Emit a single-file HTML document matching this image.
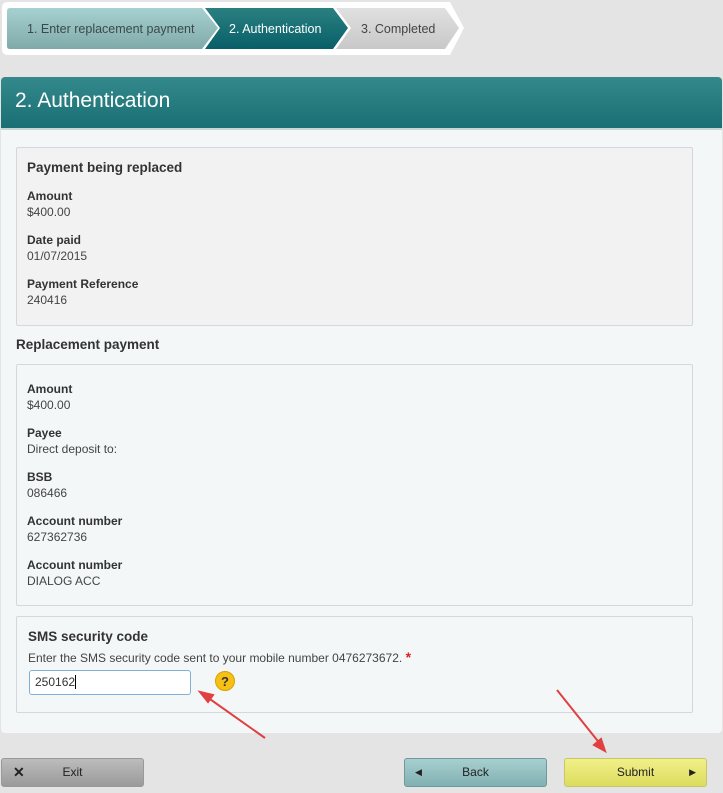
<!DOCTYPE html><html><head><style>
body{margin:0;width:723px;height:793px;background:#e4e4e4;font-family:"Liberation Sans",sans-serif;position:relative;overflow:hidden;font-size:12px;color:#333}
.a{position:absolute}
.lbl{font-weight:bold;font-size:12px;color:#333}
.val{font-size:12px;color:#444}
.box{position:absolute;left:16px;width:675px;border:1px solid #d4d8da;border-radius:2px}
.btn{position:absolute;top:758px;height:27px;width:141px;border:1px solid #999;border-radius:3px;font-size:12px;line-height:27px;text-align:center;color:#222}
</style></head><body>
<svg class="a" style="left:0;top:0" width="470" height="58">
<defs>
<linearGradient id="g1" x1="0" y1="0" x2="0" y2="1"><stop offset="0" stop-color="#a7d0d0"/><stop offset="1" stop-color="#80a9aa"/></linearGradient>
<linearGradient id="g2" x1="0" y1="0" x2="0" y2="1"><stop offset="0" stop-color="#2a8080"/><stop offset="1" stop-color="#085f68"/></linearGradient>
<linearGradient id="g3" x1="0" y1="0" x2="0" y2="1"><stop offset="0" stop-color="#e0e0e0"/><stop offset="1" stop-color="#c8c8c8"/></linearGradient>
</defs>
<path d="M8 2 H450 L464 28 L450 55 H8 Q2 55 2 49 V8 Q2 2 8 2Z" fill="#fff"/>
<path d="M10 8 H202 L218 28 L202 49 H10 Q7 49 7 46 V11 Q7 8 10 8Z" fill="url(#g1)"/>
<path d="M205 8 H333 L348 28 L333 49 H205 L220 28Z" fill="url(#g2)"/>
<path d="M336 8 H445 L459 28 L445 49 H336 L351 28Z" fill="url(#g3)"/>
<text x="27" y="33" font-family="Liberation Sans" font-size="12.5" fill="#3a4a4a">1. Enter replacement payment</text>
<text x="229" y="33" font-family="Liberation Sans" font-size="12.5" fill="#fff">2. Authentication</text>
<text x="361" y="33" font-family="Liberation Sans" font-size="12.5" fill="#444">3. Completed</text>
</svg>
<div class="a" style="left:1px;top:77px;width:721px;height:656px;background:#f4f7f8;border-radius:4px"></div>
<div class="a" style="left:1px;top:77px;width:721px;height:51px;background:linear-gradient(#33898b,#1a6f74);border-radius:4px 4px 0 0;border-bottom:2px solid #c9d5d6"></div>
<div class="a" style="left:15px;top:89px;font-size:21px;color:#fff">2. Authentication</div>
<div class="box" style="top:147px;height:177px;background:#f2f2f2"></div>
<div class="a" style="left:27px;top:160px;font-weight:bold;font-size:13.5px;color:#333">Payment being replaced</div>
<div class="a lbl" style="left:27px;top:189px">Amount</div><div class="a val" style="left:27px;top:205px">$400.00</div>
<div class="a lbl" style="left:27px;top:233px">Date paid</div><div class="a val" style="left:27px;top:249px">01/07/2015</div>
<div class="a lbl" style="left:27px;top:277px">Payment Reference</div><div class="a val" style="left:27px;top:293px">240416</div>
<div class="a" style="left:16px;top:337px;font-weight:bold;font-size:13.5px;color:#333">Replacement payment</div>
<div class="box" style="top:364px;height:240px;background:#f4f7f8"></div>
<div class="a lbl" style="left:27px;top:382px">Amount</div><div class="a val" style="left:27px;top:398px">$400.00</div>
<div class="a lbl" style="left:27px;top:426px">Payee</div><div class="a val" style="left:27px;top:442px">Direct deposit to:</div>
<div class="a lbl" style="left:27px;top:470px">BSB</div><div class="a val" style="left:27px;top:486px">086466</div>
<div class="a lbl" style="left:27px;top:514px">Account number</div><div class="a val" style="left:27px;top:530px">627362736</div>
<div class="a lbl" style="left:27px;top:558px">Account number</div><div class="a val" style="left:27px;top:574px">DIALOG ACC</div>
<div class="box" style="top:616px;height:95px;background:#f4f7f8"></div>
<div class="a" style="left:28px;top:629px;font-weight:bold;font-size:13.5px;color:#333">SMS security code</div>
<div class="a val" style="left:28px;top:649px">Enter the SMS security code sent to your mobile number 0476273672. <span style="color:#d22;font-weight:bold;font-size:14px">*</span></div>
<div class="a" style="left:29px;top:670px;width:160px;height:23px;background:#fff;border:1px solid #7fb0d8;border-radius:3px;font-size:12px;line-height:23px;padding-left:5px;box-sizing:content-box;width:155px">250162<span style="border-left:1px solid #000">&nbsp;</span></div>
<div class="a" style="left:215px;top:671px;width:20px;height:20px;border-radius:50%;background:#f6c114;border:1px solid #d9a000;box-sizing:border-box;text-align:center;font-weight:bold;font-size:13px;line-height:19px;color:#333">?</div>
<svg class="a" style="left:0;top:0" width="723" height="793">
<g stroke="#e04040" stroke-width="2" fill="#e04040">
<line x1="265" y1="738" x2="207" y2="697"/><polygon points="200,692 213,695 208,702"/>
<line x1="557" y1="690" x2="601" y2="745"/><polygon points="605,751 594,745 601,739"/>
</g></svg>
<div class="btn" style="left:1px;background:linear-gradient(#bcbcbc,#9a9a9a)"><span style="position:absolute;left:11px;font-weight:bold;font-size:14px">✕</span>Exit</div>
<div class="btn" style="left:404px;background:linear-gradient(#a8cfd0,#80b0b2);border-color:#6e9a9c"><span style="position:absolute;left:10px;font-size:9px">◀</span>Back</div>
<div class="btn" style="left:564px;background:linear-gradient(#f1f089,#dcdc5e);border-color:#c7c76a"><span style="position:absolute;right:10px;font-size:9px">▶</span>Submit</div>
</body></html>
